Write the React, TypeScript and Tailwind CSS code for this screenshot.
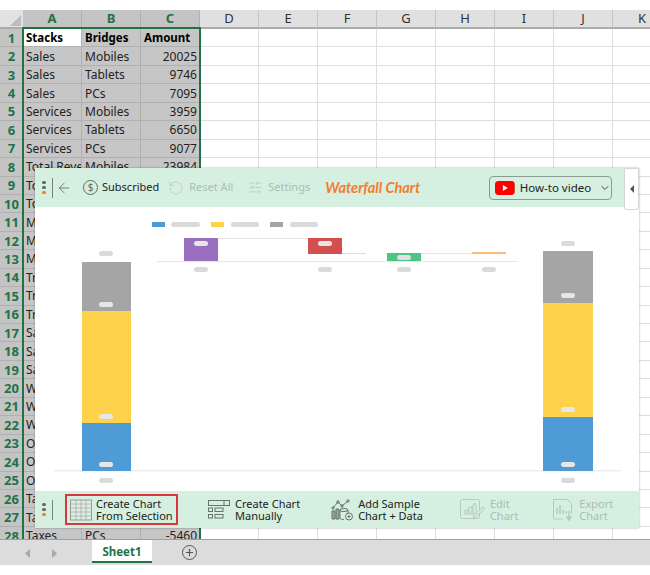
import { ArrowLeft, ChevronDown, Plus, RotateCcw, SlidersHorizontal } from "lucide-react";

const columns = ["A", "B", "C", "D", "E", "F", "G", "H", "I", "J", "K"];

const rows: [string, string, string][] = [
  ["Stacks", "Bridges", "Amount"],
  ["Sales", "Mobiles", "20025"],
  ["Sales", "Tablets", "9746"],
  ["Sales", "PCs", "7095"],
  ["Services", "Mobiles", "3959"],
  ["Services", "Tablets", "6650"],
  ["Services", "PCs", "9077"],
  ["Total Reve", "Mobiles", "23984"],
  ["To", "", ""],
  ["To", "", ""],
  ["M", "", ""],
  ["M", "", ""],
  ["M", "", ""],
  ["Tr", "", ""],
  ["Tr", "", ""],
  ["Tr", "", ""],
  ["Sa", "", ""],
  ["Sa", "", ""],
  ["Sa", "", ""],
  ["W", "", ""],
  ["W", "", ""],
  ["W", "", ""],
  ["O", "", ""],
  ["O", "", ""],
  ["O", "", ""],
  ["Ta", "", ""],
  ["Ta", "", ""],
  ["Taxes", "PCs", "-5460"],
];

function Dots() {
  return (
    <div className="flex flex-col items-center gap-[1.5px] w-[4px] shrink-0">
      <span className="size-[3.5px] rounded-full bg-[#5f6b64]" />
      <span className="size-[3.5px] rounded-full bg-[#5f6b64]" />
      <span className="size-[3.5px] rounded-full bg-[#f47b30]" />
    </div>
  );
}

function Sheet() {
  return (
    <div className="relative h-[529px] overflow-hidden bg-white text-[12px] leading-none text-[#222]">
      <div className="flex h-[19px] w-[700px] text-[13px]">
        <div className="w-[23px] shrink-0 flex items-end justify-end bg-[#e2e2e2] border-b-2 border-[#ababab] pr-[2px] pb-[1px]">
          <div className="w-0 h-0 border-l-[11px] border-b-[11px] border-l-transparent border-b-[#bdbdbd]" />
        </div>
        {columns.map((c, i) => (
          <div
            key={c}
            className={
              i < 3
                ? "w-[59px] shrink-0 flex items-center justify-center bg-[#c4c4c4] border-b-2 border-r border-b-[#217346] border-r-[#b0b0b0] font-bold text-[#217346]"
                : "w-[59px] shrink-0 flex items-center justify-center bg-[#e0e0e0] border-b-2 border-r border-b-[#ababab] border-r-[#c4c4c4] text-[#333]"
            }
          >
            {c}
          </div>
        ))}
      </div>
      {rows.map((row, r) => (
        <div key={r} className="flex h-[18.45px] w-[700px]">
          <div className="w-[23px] shrink-0 flex items-center justify-center pt-px bg-[#c4c4c4] border-b border-[#b0b0b0] text-[13px] font-bold text-[#217346]">
            {r + 1}
          </div>
          <div
            className={
              r === 0
                ? "w-[59px] shrink-0 flex items-center pl-[3px] pt-px overflow-hidden whitespace-nowrap bg-white border-b border-r border-[#b4b4b4] text-[11.5px] font-bold text-black"
                : "w-[59px] shrink-0 flex items-center pl-[3px] pt-px overflow-hidden whitespace-nowrap bg-[#c6c6c6] border-b border-r border-[#b0b0b0]"
            }
          >
            {row[0]}
          </div>
          <div
            className={
              r === 0
                ? "w-[59px] shrink-0 flex items-center pl-[3px] pt-px overflow-hidden whitespace-nowrap bg-[#c6c6c6] border-b border-r border-[#b0b0b0] text-[11.5px] font-bold text-black"
                : "w-[59px] shrink-0 flex items-center pl-[3px] pt-px overflow-hidden whitespace-nowrap bg-[#c6c6c6] border-b border-r border-[#b0b0b0]"
            }
          >
            {row[1]}
          </div>
          <div
            className={
              r === 0
                ? "w-[59px] shrink-0 flex items-center pl-[3px] pt-px bg-[#c6c6c6] border-b border-r border-[#b0b0b0] text-[11.5px] font-bold text-black"
                : "w-[59px] shrink-0 flex items-center justify-end pr-[2px] pt-px bg-[#c6c6c6] border-b border-r border-[#b0b0b0]"
            }
          >
            {row[2]}
          </div>
          {columns.slice(3).map((c) => (
            <div key={c} className="w-[59px] shrink-0 bg-white border-b border-r border-[#dedede]" />
          ))}
        </div>
      ))}
      <div className="absolute left-[22px] top-[17px] w-[179px] h-[540px] border-2 border-[#217346]" />
    </div>
  );
}

function TabsBar() {
  return (
    <div className="flex h-[26px] items-start bg-[#dcdcdc] border-t border-[#9f9f9f]">
      <svg className="ml-[25px] mt-[9px]" width="40" height="9" viewBox="0 0 40 9">
        <path d="M5 0v9L0 4.5z" fill="#a8a8a8" />
        <path d="M27 0v9l5-4.500z" fill="#a8a8a8" />
      </svg>
      <div className="ml-[27px] w-[60px] h-[23px] flex items-center justify-center pt-[2px] bg-white border-b-2 border-[#217346] text-[11.5px] font-bold text-[#217346]">
        Sheet1
      </div>
      <div className="ml-[30px] mt-[5px] size-[15px] rounded-full border border-[#555] flex items-center justify-center">
        <Plus size={11} strokeWidth={2.5} className="text-[#555]" />
      </div>
    </div>
  );
}

function TopBar() {
  return (
    <div className="flex h-[39px] w-[590px] items-center whitespace-nowrap bg-[#d5f0e1] pl-[7px] pr-[13px] text-[11px]">
      <Dots />
      <div className="ml-[6px] w-px h-[20px] bg-[#76857c]" />
      <ArrowLeft size={16} strokeWidth={1.25} className="ml-[3px] text-[#5f6b64]" />
      <div className="ml-[11px] size-[15px] rounded-full border border-[#5f6b64] flex items-center justify-center text-[10px] text-[#5f6b64]">
        $
      </div>
      <span className="ml-[4px] text-[#222]">Subscribed</span>
      <RotateCcw size={16} strokeWidth={1.25} className="ml-[9px] text-[#b7c9bf]" />
      <span className="ml-[5px] text-[#abbdb3]">Reset All</span>
      <SlidersHorizontal size={15} strokeWidth={1} className="ml-[15px] text-[#abbdb3]" />
      <span className="ml-[5px] text-[#abbdb3]">Settings</span>
      <span className="ml-[15px] font-['Lato',sans-serif] text-[14.5px] font-bold italic text-[#f47b30]">
        Waterfall Chart
      </span>
      <div className="ml-auto flex h-[24px] w-[123px] items-center rounded-[4px] border border-[#8d9a92] pl-[5px] text-[11.5px]">
        <svg width="20" height="14" viewBox="0 0 20 14">
          <rect width="20" height="14" rx="3.500" fill="#f00" />
          <path d="M8 4v6l5-3z" fill="#fff" />
        </svg>
        <span className="ml-[5px] text-[#222]">How-to video</span>
        <ChevronDown size={12} className="ml-[8px] text-[#444]" />
      </div>
    </div>
  );
}

function Chart() {
  return (
    <svg className="block" width="604" height="284" viewBox="0 0 604 284">
      <rect x="117" y="15" width="13" height="5" fill="#4e9bd6" />
      <rect x="136" y="15" width="29" height="5" rx="2.500" fill="#dadada" />
      <rect x="176" y="15" width="13" height="5" fill="#ffd24c" />
      <rect x="196" y="15" width="28" height="5" rx="2.500" fill="#dadada" />
      <rect x="235" y="15" width="13" height="5" fill="#a5a5a5" />
      <rect x="255" y="15" width="28" height="5" rx="2.500" fill="#dadada" />

      <rect x="19" y="263" width="567" height="1.500" fill="#eeeeee" />
      <rect x="47" y="55" width="49" height="49" fill="#a5a5a5" />
      <rect x="47" y="104" width="49" height="112" fill="#ffd24c" />
      <rect x="47" y="216" width="49" height="48" fill="#4e9bd6" />
      <rect x="508" y="44" width="50" height="52" fill="#a5a5a5" />
      <rect x="508" y="96" width="50" height="114" fill="#ffd24c" />
      <rect x="508" y="210" width="50" height="54" fill="#4e9bd6" />

      <rect x="64" y="44" width="14" height="5" rx="2.500" fill="#dadada" />
      <rect x="64" y="95" width="14" height="5" rx="2.500" fill="#e6e6e6" />
      <rect x="64" y="207" width="14" height="5" rx="2.500" fill="#e6e6e6" />
      <rect x="64" y="255" width="14" height="5" rx="2.500" fill="#e6e6e6" />
      <rect x="64" y="271" width="14" height="5" rx="2.500" fill="#dadada" />
      <rect x="526" y="34" width="14" height="5" rx="2.500" fill="#dadada" />
      <rect x="526" y="86" width="14" height="5" rx="2.500" fill="#e6e6e6" />
      <rect x="526" y="200" width="14" height="5" rx="2.500" fill="#e6e6e6" />
      <rect x="526" y="255" width="14" height="5" rx="2.500" fill="#e6e6e6" />
      <rect x="526" y="271" width="14" height="5" rx="2.500" fill="#dadada" />

      <rect x="122" y="54" width="361" height="1" fill="#e6e6e6" />
      <rect x="183" y="31" width="90" height="1" fill="#e6e6e6" />
      <rect x="307" y="46" width="24" height="1" fill="#dedede" />
      <rect x="386" y="46" width="51" height="1" fill="#e6e6e6" />
      <rect x="149" y="31" width="34" height="23" fill="#9b6fc0" />
      <rect x="273" y="31" width="34" height="16" fill="#d64f4f" />
      <rect x="352" y="46" width="34" height="8" fill="#4cc583" />
      <rect x="437" y="45" width="34" height="2" fill="#fdbb76" />

      <rect x="159" y="34" width="14" height="5" rx="2.500" fill="#e6e6e6" />
      <rect x="283" y="34" width="14" height="5" rx="2.500" fill="#e6e6e6" />
      <rect x="362" y="48" width="14" height="5" rx="2.500" fill="#e0e0e0" />
      <rect x="159" y="60" width="14" height="5" rx="2.500" fill="#dadada" />
      <rect x="283" y="60" width="14" height="5" rx="2.500" fill="#dadada" />
      <rect x="362" y="60" width="14" height="5" rx="2.500" fill="#dadada" />
      <rect x="447" y="60" width="14" height="5" rx="2.500" fill="#dadada" />
    </svg>
  );
}

function TableIcon() {
  return (
    <svg className="shrink-0" width="22" height="22" viewBox="0 0 22 22" fill="#e3ebe6" stroke="#a3afa8" strokeWidth="0.8">
      <rect x="0.500" y="1" width="21" height="20" stroke="#7d8a82" />
      <path d="M0.500 5h21M0.500 9h21M0.500 13h21M0.500 17h21M6 1v20M11 1v20M16 1v20" fill="none" />
    </svg>
  );
}

function ManualIcon() {
  return (
    <svg className="shrink-0" width="22" height="22" viewBox="0 0 22 22" fill="none" stroke="#66726b" strokeWidth="1">
      <rect x="0.500" y="1.500" width="21" height="5" />
      <path d="M16 1.500v5" />
      <rect x="0.500" y="9" width="4" height="3.500" />
      <rect x="7" y="9" width="8" height="3.500" />
      <rect x="0.500" y="15.500" width="4" height="3.500" />
      <rect x="7" y="15.500" width="8" height="3.500" />
    </svg>
  );
}

function SampleIcon() {
  return (
    <svg className="shrink-0" width="22" height="23" viewBox="0 0 22 23" fill="none" stroke="#66726b" strokeWidth="1">
      <path d="M2 10l5-6 4 4 6-5" />
      <circle cx="2" cy="10" r="1.200" />
      <circle cx="7" cy="4" r="1.200" />
      <circle cx="11" cy="8" r="1.200" />
      <circle cx="17" cy="3" r="1.200" />
      <path d="M1 13h3v8H1zM5 11h3v10H5z" fill="#9aa69f" />
      <ellipse cx="13" cy="12" rx="4" ry="1.500" />
      <path d="M9 12v8c0 1 2 1.500 4 1.500M17 12v3" />
      <circle cx="18" cy="18.500" r="3.500" fill="#d5f0e1" />
      <path d="M16.500 18.500h3M18 17v3" />
    </svg>
  );
}

function EditIcon() {
  return (
    <svg className="shrink-0" width="25" height="21" viewBox="0 0 25 21" fill="none" stroke="#b7c9bf" strokeWidth="1">
      <rect x="0.500" y="0.500" width="19" height="19" rx="2" />
      <path d="M5 15v-4h3v4zM9 15V8h3v7zM13 15V5h3v10z" />
      <path d="M13 20l1-4 9-8 1.500 2-9 8z" fill="#d5f0e1" />
    </svg>
  );
}

function ExportIcon() {
  return (
    <svg className="shrink-0" width="20" height="22" viewBox="0 0 20 22" fill="none" stroke="#b7c9bf" strokeWidth="1">
      <path d="M0.500 0.500h14l4 4v10M10 20H0.500V0.500" />
      <path d="M4 15V9M7 15V6M10 15v-4M13 15v-3" strokeWidth="1.500" />
      <path d="M16 12v8M13.500 17.500L16 21l2.500-3.500" strokeWidth="1.500" />
    </svg>
  );
}

function Action({ lines, muted }: { lines: [string, string]; muted?: boolean }) {
  return (
    <div className={muted ? "whitespace-nowrap text-[11px] leading-[12px] text-[#abbdb3]" : "whitespace-nowrap text-[11px] leading-[12px] text-[#222]"}>
      <div>{lines[0]}</div>
      <div>{lines[1]}</div>
    </div>
  );
}

function BottomBar() {
  return (
    <div className="flex h-[37px] items-center bg-[#d5f0e1] pl-[7px]">
      <Dots />
      <div className="ml-[6px] w-px h-[20px] bg-[#76857c]" />
      <div className="ml-[12px] flex h-[31px] w-[113px] items-center gap-[4px] border-2 border-[#d9363e] pl-[3px]">
        <TableIcon />
        <Action lines={["Create Chart", "From Selection"]} />
      </div>
      <div className="ml-[30px] flex items-center gap-[5px]">
        <ManualIcon />
        <Action lines={["Create Chart", "Manually"]} />
      </div>
      <div className="ml-[31px] flex items-center gap-[5px]">
        <SampleIcon />
        <Action lines={["Add Sample", "Chart + Data"]} />
      </div>
      <div className="ml-[37px] flex items-center gap-[5px]">
        <EditIcon />
        <Action lines={["Edit", "Chart"]} muted />
      </div>
      <div className="ml-[35px] flex items-center gap-[6px]">
        <ExportIcon />
        <Action lines={["Export", "Chart"]} muted />
      </div>
    </div>
  );
}

function Panel() {
  return (
    <div className="absolute left-[35px] top-[168px] w-[604px] bg-white shadow-[0_0_2px_rgba(0,0,0,0.35)]">
      <TopBar />
      <Chart />
      <BottomBar />
      <div className="absolute right-0 top-0 flex h-[42px] w-[15px] items-center justify-center rounded-b-[2px] border border-[#d6d6d6] bg-white">
        <span className="w-0 h-0 border-y-[4px] border-r-[4px] border-y-transparent border-r-[#555]" />
      </div>
    </div>
  );
}

export default function App() {
  return (
    <div className="relative h-[575px] w-[650px] overflow-hidden bg-white font-['Noto_Sans',sans-serif]">
      <div className="h-[10px]" />
      <Sheet />
      <TabsBar />
      <Panel />
    </div>
  );
}
